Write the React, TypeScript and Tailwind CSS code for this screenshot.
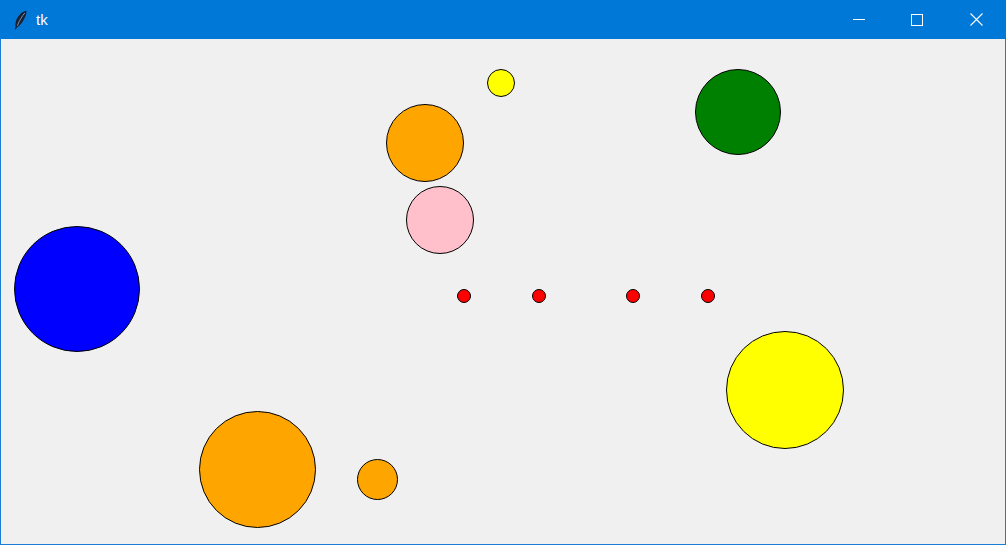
import React from 'react';

type Dot = {x: number; y: number; d: number; color: string};

// bounding boxes in canvas coordinates (canvas starts at 1,39 on screen)
const dots: Dot[] = [
  {x: 13, y: 187, d: 126, color: 'bg-[#0000ff]'},
  {x: 486, y: 30, d: 28, color: 'bg-[#ffff00]'},
  {x: 385, y: 65, d: 78, color: 'bg-[#ffa500]'},
  {x: 405, y: 147, d: 68, color: 'bg-[#ffc0cb]'},
  {x: 694, y: 30, d: 86, color: 'bg-[#008000]'},
  {x: 725, y: 292, d: 118, color: 'bg-[#ffff00]'},
  {x: 198, y: 372, d: 117, color: 'bg-[#ffa500]'},
  {x: 356, y: 420, d: 41, color: 'bg-[#ffa500]'},
  {x: 456, y: 250, d: 14, color: 'bg-[#ff0000]'},
  {x: 531, y: 250, d: 14, color: 'bg-[#ff0000]'},
  {x: 625, y: 250, d: 14, color: 'bg-[#ff0000]'},
  {x: 700, y: 250, d: 14, color: 'bg-[#ff0000]'},
];

const Feather = () => (
  <svg width="14" height="20" viewBox="0 0 14 20">
    <path
      d="M13 0.8 C9 1.8 4.6 6 3 11 C2.3 13.5 2.2 15.5 2.6 17 L1.6 19.6 L2.8 19.6 L3.8 17.4 C7 16 10.5 11 12.5 6 C13.5 3.5 13.7 1.6 13 0.8 Z"
      fill="#1a1f2c"
    />
    <path d="M11.8 3 C9.2 6 6.6 10 4.3 15.8" stroke="#7b92c4" strokeWidth="1" fill="none" />
  </svg>
);

const App: React.FC = () => {
  return (
    <div className="w-[1006px] h-[545px] flex flex-col" style={{fontFamily: '"Segoe UI", "Liberation Sans", sans-serif'}}>
      {/* title bar */}
      <div className="h-[39px] shrink-0 bg-[#0078d7] flex items-center text-white">
        <div className="w-[36px] flex items-center justify-center pl-[4px] pt-[1px]">
          <Feather />
        </div>
        <span className="text-[15px] leading-none" style={{fontFamily: '"Liberation Sans", sans-serif'}}>tk</span>
        <div className="ml-auto flex h-full">
          <div className="w-[58px] h-full flex items-center justify-center">
            <div className="w-[12px] h-[1px] bg-white" />
          </div>
          <div className="w-[58px] h-full flex items-center justify-center">
            <div className="w-[12px] h-[12px] border border-white" />
          </div>
          <div className="w-[60px] h-full flex items-center justify-center">
            <svg width="13" height="13" viewBox="0 0 13 13">
              <path d="M0.5 0.5 L12.5 12.5 M12.5 0.5 L0.5 12.5" stroke="white" strokeWidth="1.1" />
            </svg>
          </div>
        </div>
      </div>

      {/* canvas */}
      <div className="flex-1 relative bg-[#f0f0f0] border-x border-b border-[#1a7fd4] overflow-hidden">
        {dots.map((c, i) => (
          <div
            key={i}
            className={`absolute rounded-full border border-black ${c.color}`}
            style={{left: c.x, top: c.y, width: c.d, height: c.d}}
          />
        ))}
      </div>
    </div>
  );
};

export default App;
